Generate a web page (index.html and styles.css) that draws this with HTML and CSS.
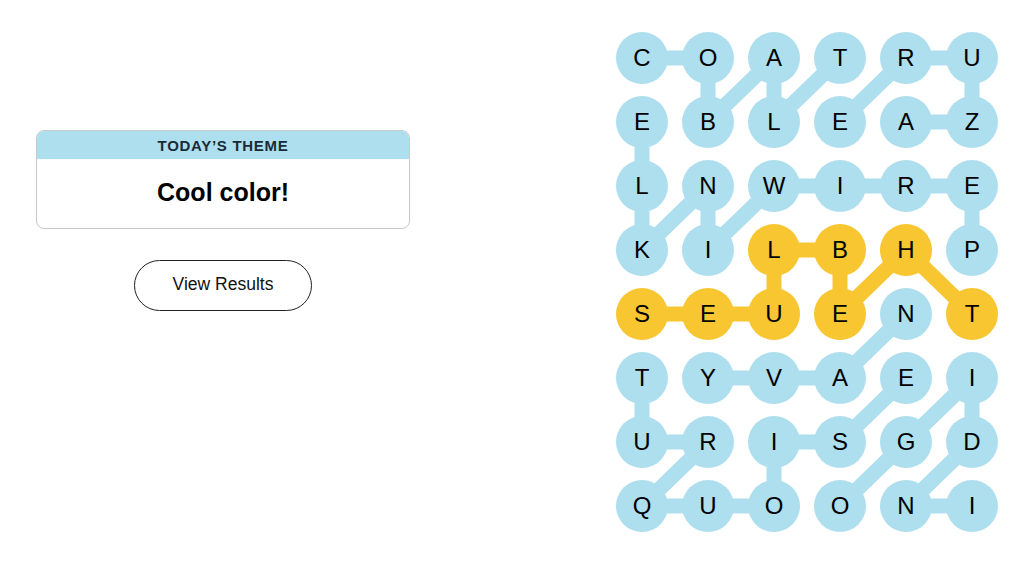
FILE: index.html
```html
<!DOCTYPE html>
<html>
<head>
<meta charset="utf-8">
<link rel="stylesheet" href="styles.css">
</head>
<body>
<main class="page">
  <section class="side">
    <div class="theme">
      <div class="theme-head">TODAY’S THEME</div>
      <div class="theme-body">Cool color!</div>
    </div>
    <button class="results">View Results</button>
  </section>
  <section class="board">
    <svg class="links" width="396" height="512" viewBox="0 0 396 512">
      <g fill="none" stroke-width="15" stroke-linejoin="round" stroke-linecap="round">
        <polyline class="blue" points="33,32 99,32 99,96 165,32 165,96 231,32"/>
        <polyline class="blue" points="297,96 363,96 363,32 297,32 231,96"/>
        <polyline class="blue" points="363,224 363,160 297,160 231,160 165,160 99,224 99,160 33,224 33,160 33,96"/>
        <polyline class="blue" points="33,352 33,416 99,416 33,480 99,480 165,480 165,416 231,416 297,352"/>
        <polyline class="blue" points="297,288 231,352 165,352 99,352"/>
        <polyline class="blue" points="363,480 297,480 363,416 363,352 297,416 231,480"/>
        <polyline class="gold" points="363,288 297,224 231,288 231,224 165,224 165,288 99,288 33,288"/>
      </g>
    </svg>
    <div class="cells">
      <span class="cell"><span class="dot b">C</span></span>
      <span class="cell"><span class="dot b">O</span></span>
      <span class="cell"><span class="dot b">A</span></span>
      <span class="cell"><span class="dot b">T</span></span>
      <span class="cell"><span class="dot b">R</span></span>
      <span class="cell"><span class="dot b">U</span></span>

      <span class="cell"><span class="dot b">E</span></span>
      <span class="cell"><span class="dot b">B</span></span>
      <span class="cell"><span class="dot b">L</span></span>
      <span class="cell"><span class="dot b">E</span></span>
      <span class="cell"><span class="dot b">A</span></span>
      <span class="cell"><span class="dot b">Z</span></span>

      <span class="cell"><span class="dot b">L</span></span>
      <span class="cell"><span class="dot b">N</span></span>
      <span class="cell"><span class="dot b">W</span></span>
      <span class="cell"><span class="dot b">I</span></span>
      <span class="cell"><span class="dot b">R</span></span>
      <span class="cell"><span class="dot b">E</span></span>

      <span class="cell"><span class="dot b">K</span></span>
      <span class="cell"><span class="dot b">I</span></span>
      <span class="cell"><span class="dot y">L</span></span>
      <span class="cell"><span class="dot y">B</span></span>
      <span class="cell"><span class="dot y">H</span></span>
      <span class="cell"><span class="dot b">P</span></span>

      <span class="cell"><span class="dot y">S</span></span>
      <span class="cell"><span class="dot y">E</span></span>
      <span class="cell"><span class="dot y">U</span></span>
      <span class="cell"><span class="dot y">E</span></span>
      <span class="cell"><span class="dot b">N</span></span>
      <span class="cell"><span class="dot y">T</span></span>

      <span class="cell"><span class="dot b">T</span></span>
      <span class="cell"><span class="dot b">Y</span></span>
      <span class="cell"><span class="dot b">V</span></span>
      <span class="cell"><span class="dot b">A</span></span>
      <span class="cell"><span class="dot b">E</span></span>
      <span class="cell"><span class="dot b">I</span></span>

      <span class="cell"><span class="dot b">U</span></span>
      <span class="cell"><span class="dot b">R</span></span>
      <span class="cell"><span class="dot b">I</span></span>
      <span class="cell"><span class="dot b">S</span></span>
      <span class="cell"><span class="dot b">G</span></span>
      <span class="cell"><span class="dot b">D</span></span>

      <span class="cell"><span class="dot b">Q</span></span>
      <span class="cell"><span class="dot b">U</span></span>
      <span class="cell"><span class="dot b">O</span></span>
      <span class="cell"><span class="dot b">O</span></span>
      <span class="cell"><span class="dot b">N</span></span>
      <span class="cell"><span class="dot b">I</span></span>
    </div>
  </section>
</main>
</body>
</html>
```

FILE: styles.css
```css
* { box-sizing: border-box; }
html, body { margin: 0; padding: 0; background: #fff; }
body {
  width: 1024px;
  height: 564px;
  overflow: hidden;
  font-family: "Liberation Sans", Arial, sans-serif;
  color: #000;
}
.page {
  display: flex;
  align-items: flex-start;
}
.side {
  width: 446px;
  padding-top: 130px;
  display: flex;
  flex-direction: column;
  align-items: center;
}
.theme {
  width: 374px;
  border: 1px solid #c9c9c9;
  border-radius: 8px;
  overflow: hidden;
  display: flex;
  flex-direction: column;
}
.theme-head {
  height: 28px;
  background: #aedfee;
  display: flex;
  align-items: center;
  justify-content: center;
  font-weight: bold;
  font-size: 15px;
  letter-spacing: 0.7px;
  color: #1a2b38;
}
.theme-body {
  height: 69px;
  display: flex;
  align-items: center;
  justify-content: center;
  font-weight: bold;
  font-size: 25px;
  color: #000;
  padding-bottom: 3px;
}
.results {
  margin-top: 31px;
  width: 178px;
  height: 51px;
  border: 1px solid #222;
  border-radius: 26px;
  background: #fff;
  font-family: "Liberation Sans", Arial, sans-serif;
  font-size: 17.5px;
  color: #111;
  padding: 0 0 2px;
}
.board {
  position: relative;
  margin-left: 163px;
  margin-top: 26px;
  width: 396px;
  height: 512px;
}
.links {
  position: absolute;
  left: 0;
  top: 0;
  z-index: 0;
}
.blue { stroke: #aedfee; }
.gold { stroke: #f7c631; }
.cells {
  position: relative;
  z-index: 1;
  display: grid;
  grid-template-columns: repeat(6, 66px);
  grid-template-rows: repeat(8, 64px);
}
.cell {
  display: flex;
  align-items: center;
  justify-content: center;
}
.dot {
  width: 52px;
  height: 52px;
  border-radius: 50%;
  display: flex;
  align-items: center;
  justify-content: center;
  font-size: 24px;
  color: #000;
}
.dot.b { background: #aedfee; }
.dot.y { background: #f7c631; }
```
